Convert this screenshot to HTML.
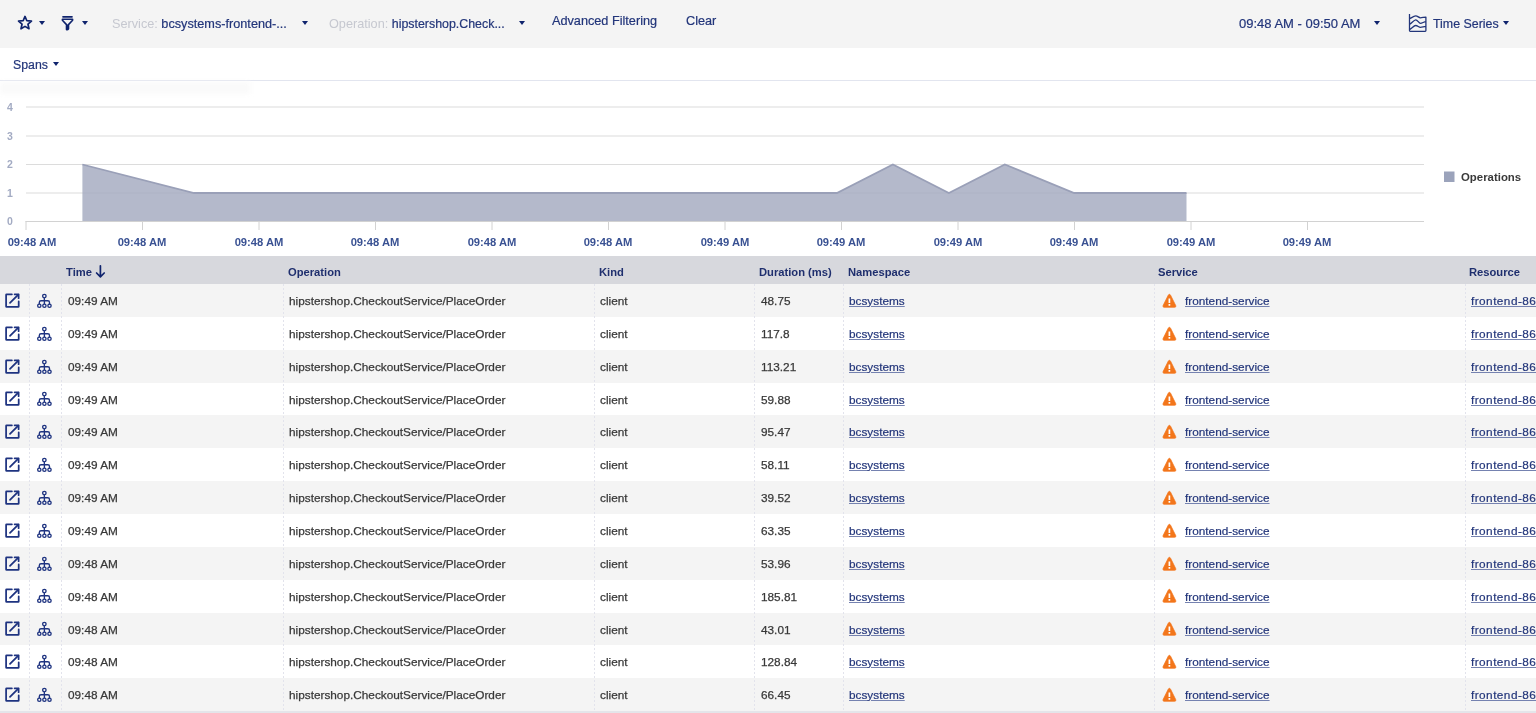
<!DOCTYPE html>
<html><head><meta charset="utf-8">
<style>
*{margin:0;padding:0;box-sizing:border-box}
html,body{width:1536px;height:713px;overflow:hidden;background:#fff;font-family:"Liberation Sans",sans-serif}
.a,.c,.th,.xlab,.ylab{will-change:transform}
.a{position:absolute;white-space:nowrap}
#top{position:absolute;left:0;top:0;width:1536px;height:48px;background:#f4f4f4}
.nav{color:#22357a;-webkit-text-stroke:0.2px #22357a}
.lbl{color:#c6c8d0}
.car{position:absolute;width:0;height:0;border-left:3.7px solid transparent;border-right:3.7px solid transparent;border-top:4.2px solid #0f236d}
#sep{position:absolute;left:0;top:80px;width:1536px;height:1px;background:#e2e5ef}
#th{position:absolute;left:0;top:256px;width:1536px;height:28px;background:#d7d8dd}
.th{position:absolute;white-space:nowrap;top:265px;font-size:11.2px;font-weight:bold;color:#1f2f6e;line-height:14px}
.row{position:absolute;left:0;width:1536px;height:33px}
.g{background:#f4f4f4}
.w{background:#fff}
.c{position:absolute;white-space:nowrap;font-size:11.8px;color:#383838;-webkit-text-stroke:0.25px #383838;line-height:14px}
.lnk{color:#22357a;-webkit-text-stroke:0.2px #22357a;text-decoration:underline;text-decoration-color:#7582b0;text-decoration-thickness:1.3px;text-underline-offset:0.8px}
.vs{position:absolute;top:284px;height:427px;width:1px;background:repeating-linear-gradient(to bottom,#e2e3ec 0 2px,transparent 2px 4px)}
.ylab{position:absolute;left:7px;font-size:10.5px;font-weight:bold;color:#a3abc3;line-height:10px}
.xlab{position:absolute;white-space:nowrap;top:236px;font-size:11.2px;font-weight:bold;color:#3a5293;line-height:12px}
</style></head><body>
<div id="top"></div>
<!-- star -->
<svg class="a" style="left:16.5px;top:15.3px" width="16" height="16" viewBox="0 0 16 16"><path d="M8.00 1.45 L9.84 5.72 L14.47 6.15 L10.97 9.22 L12.00 13.75 L8.00 11.38 L4.00 13.75 L5.03 9.22 L1.53 6.15 L6.16 5.72Z" fill="none" stroke="#0f236d" stroke-width="1.7" stroke-linejoin="round"/></svg>
<div class="car" style="left:39.3px;top:21px"></div>
<!-- funnel -->
<svg class="a" style="left:61px;top:14.6px" width="13" height="17" viewBox="0 0 13 17"><path d="M2 1.8 H11" stroke="#0f236d" stroke-width="1.7" stroke-linecap="round"/><path d="M1.4 4.3 H11.6 V5.3 L7.5 9.6 V13.8 Q6.5 15.2 5.5 14.5 V9.6 L1.4 5.3 Z" fill="none" stroke="#0f236d" stroke-width="1.6" stroke-linejoin="round"/><path d="M5.6 9.6 V14.7 H7.4 V9.6Z" fill="#0f236d"/></svg>
<div class="car" style="left:81.7px;top:21px"></div>
<div class="a" style="left:112px;top:16px;font-size:12.7px;line-height:16px"><span class="lbl">Service: </span><span class="nav">bcsystems-frontend-...</span></div>
<div class="car" style="left:302px;top:21px"></div>
<div class="a" style="left:329px;top:16px;font-size:12.7px;line-height:16px"><span class="lbl">Operation: </span><span class="nav" style="font-size:12.4px">hipstershop.Check...</span></div>
<div class="car" style="left:519px;top:21px"></div>
<div class="a nav" style="left:552px;top:13px;font-size:12.7px;line-height:16px">Advanced Filtering</div>
<div class="a nav" style="left:686px;top:13px;font-size:12.7px;line-height:16px">Clear</div>
<div class="a nav" style="left:1239px;top:16px;font-size:13px;line-height:16px">09:48 AM - 09:50 AM</div>
<div class="car" style="left:1374px;top:21px"></div>
<svg class="a" style="left:1408px;top:14px" width="20" height="19" viewBox="0 0 20 19"><path d="M1.5 0.3 V16.6 Q1.5 17.3 2.2 17.3 H17.2 Q17.9 17.3 17.9 16.6 V3.1 M1.5 4.9 C3.6 3.7 6 1.8 7.7 1.8 C9.6 1.8 10.8 3.8 12.4 3.8 C14.2 3.8 16 3.1 17.9 3.1 M1.5 10.4 C3.6 9.200000000000001 6 5.8 7.7 5.8 C9.6 5.8 10.8 9.3 12.4 9.3 C14.2 9.3 16 7.7 17.9 7.7 M1.5 15.7 C3.6 14.5 6 11.5 7.7 11.5 C9.6 11.5 10.8 13.3 12.4 13.3 C14.2 13.3 16 12.4 17.9 12.4" fill="none" stroke="#22357a" stroke-width="1.3" stroke-linejoin="round" stroke-linecap="round"/></svg>
<div class="a nav" style="left:1433px;top:16px;font-size:12.4px;line-height:16px">Time Series</div>
<div class="car" style="left:1503px;top:21px"></div>

<div class="a nav" style="left:12.5px;top:57.3px;font-size:12.3px;line-height:16px">Spans</div>
<div class="car" style="left:52.6px;top:62px"></div>
<div id="sep"></div>
<div class="a" style="left:0;top:82px;width:250px;height:12px;background:#fafafa;filter:blur(2px)"></div>

<!-- chart -->
<svg class="a" style="left:0;top:81px" width="1536" height="175" viewBox="0 81 1536 175">
<g stroke="#dcdcdc" stroke-width="1.1">
<line x1="26" y1="107" x2="1424" y2="107"/>
<line x1="26" y1="136" x2="1424" y2="136"/>
<line x1="26" y1="164.5" x2="1424" y2="164.5"/>
<line x1="26" y1="193" x2="1424" y2="193"/>
</g>
<path d="M82.4 221.5 L82.4 164.5 L194.1 193 L836.9 193 L892.9 164.5 L948.9 193 L1004.8 164.5 L1074.2 193 L1186.5 193 L1186.5 221.5 Z" fill="#a7adc2" fill-opacity="0.85"/>
<path d="M82.4 164.5 L194.1 193 L836.9 193 L892.9 164.5 L948.9 193 L1004.8 164.5 L1074.2 193 L1186.5 193" fill="none" stroke="#9aa0b8" stroke-width="1.8"/>
<g stroke="#d2d2d2" stroke-width="1">
<line x1="25.5" y1="221.5" x2="1424" y2="221.5"/>
<line x1="26" y1="221" x2="26" y2="230"/>
<line x1="142.5" y1="221" x2="142.5" y2="230"/>
<line x1="259" y1="221" x2="259" y2="230"/>
<line x1="375.5" y1="221" x2="375.5" y2="230"/>
<line x1="492" y1="221" x2="492" y2="230"/>
<line x1="608.5" y1="221" x2="608.5" y2="230"/>
<line x1="725" y1="221" x2="725" y2="230"/>
<line x1="841.5" y1="221" x2="841.5" y2="230"/>
<line x1="958" y1="221" x2="958" y2="230"/>
<line x1="1074.5" y1="221" x2="1074.5" y2="230"/>
<line x1="1191" y1="221" x2="1191" y2="230"/>
<line x1="1307.5" y1="221" x2="1307.5" y2="230"/>
</g>
<rect x="1444" y="171.5" width="10.5" height="10.5" fill="#9ba3bb"/>
</svg>
<div class="ylab" style="top:102px">4</div>
<div class="ylab" style="top:131px">3</div>
<div class="ylab" style="top:159px">2</div>
<div class="ylab" style="top:188px">1</div>
<div class="ylab" style="top:216px">0</div>
<div class="a" style="left:1460.7px;top:171px;font-size:11.4px;font-weight:bold;color:#3a3a3a;line-height:12px">Operations</div>
<div class="xlab" style="left:6.6px;width:50px;text-align:center">09:48 AM</div>
<div class="xlab" style="left:117.4px;width:50px;text-align:center">09:48 AM</div>
<div class="xlab" style="left:233.9px;width:50px;text-align:center">09:48 AM</div>
<div class="xlab" style="left:350.4px;width:50px;text-align:center">09:48 AM</div>
<div class="xlab" style="left:466.8px;width:50px;text-align:center">09:48 AM</div>
<div class="xlab" style="left:583.2px;width:50px;text-align:center">09:48 AM</div>
<div class="xlab" style="left:699.7px;width:50px;text-align:center">09:49 AM</div>
<div class="xlab" style="left:816.1px;width:50px;text-align:center">09:49 AM</div>
<div class="xlab" style="left:932.6px;width:50px;text-align:center">09:49 AM</div>
<div class="xlab" style="left:1049.0px;width:50px;text-align:center">09:49 AM</div>
<div class="xlab" style="left:1165.5px;width:50px;text-align:center">09:49 AM</div>
<div class="xlab" style="left:1282.0px;width:50px;text-align:center">09:49 AM</div>

<div id="th"></div>
<div class="row g" style="top:284.000px"></div>
<div class="row w" style="top:316.850px"></div>
<div class="row g" style="top:349.700px"></div>
<div class="row w" style="top:382.550px"></div>
<div class="row g" style="top:415.400px"></div>
<div class="row w" style="top:448.250px"></div>
<div class="row g" style="top:481.100px"></div>
<div class="row w" style="top:513.950px"></div>
<div class="row g" style="top:546.800px"></div>
<div class="row w" style="top:579.650px"></div>
<div class="row g" style="top:612.500px"></div>
<div class="row w" style="top:645.350px"></div>
<div class="row g" style="top:678.200px"></div>
<svg class="a" style="left:4px;top:291.80px" width="17" height="17" viewBox="0 0 17 17"><g fill="none" stroke="#1e3380" stroke-width="1.75" stroke-linecap="round" stroke-linejoin="round"><path d="M7.9 2.3 H2.6 Q2.1 2.3 2.1 2.8 V14.4 Q2.1 14.9 2.6 14.9 H14.2 Q14.7 14.9 14.7 14.4 V9.4"/><path d="M6 10.9 L14.3 2.6"/><path d="M10.6 2.3 H14.6 V6.2"/></g></svg>
<svg class="a" style="left:36px;top:291.80px" width="17" height="17" viewBox="0 0 17 17"><g fill="none" stroke="#1e3380" stroke-width="1.35"><circle cx="8.35" cy="4.1" r="1.75"/><circle cx="3.3" cy="13.7" r="1.65"/><circle cx="8.4" cy="13.7" r="1.65"/><circle cx="13.5" cy="13.7" r="1.65"/><path d="M8.35 5.85 V8.7 M8.4 8.7 V12 M3.3 12 V10.4 Q3.3 8.7 5 8.7 H11.8 Q13.5 8.7 13.5 10.4 V12.6"/></g></svg>
<div class="c" style="left:68px;top:294.00px">09:49 AM</div>
<div class="c" style="left:289px;top:294.00px">hipstershop.CheckoutService/PlaceOrder</div>
<div class="c" style="left:600px;top:294.00px">client</div>
<div class="c" style="left:761px;top:294.00px">48.75</div>
<div class="c lnk" style="left:849px;top:294.00px">bcsystems</div>
<svg class="a" style="left:1160.8px;top:291.80px" width="17" height="17" viewBox="0 0 17 17"><path d="M8.4 2.3 Q9.0 2.3 9.5 3.1 L14.7 13.5 Q15.4 15.3 13.8 15.3 H3.0 Q1.4 15.3 2.1 13.5 L7.3 3.1 Q7.8 2.3 8.4 2.3Z" fill="#f3761b" stroke="#f3761b" stroke-width="0.7" stroke-linejoin="round"/><path d="M8.4 6.4 V10.9 M8.4 12.1 V13.7" stroke="#fff" stroke-width="1.7"/></svg>
<div class="c lnk" style="left:1185px;top:294.00px">frontend-service</div>
<div class="c lnk" style="left:1471px;top:294.00px;letter-spacing:0.45px">frontend-86</div>
<svg class="a" style="left:4px;top:324.65px" width="17" height="17" viewBox="0 0 17 17"><g fill="none" stroke="#1e3380" stroke-width="1.75" stroke-linecap="round" stroke-linejoin="round"><path d="M7.9 2.3 H2.6 Q2.1 2.3 2.1 2.8 V14.4 Q2.1 14.9 2.6 14.9 H14.2 Q14.7 14.9 14.7 14.4 V9.4"/><path d="M6 10.9 L14.3 2.6"/><path d="M10.6 2.3 H14.6 V6.2"/></g></svg>
<svg class="a" style="left:36px;top:324.65px" width="17" height="17" viewBox="0 0 17 17"><g fill="none" stroke="#1e3380" stroke-width="1.35"><circle cx="8.35" cy="4.1" r="1.75"/><circle cx="3.3" cy="13.7" r="1.65"/><circle cx="8.4" cy="13.7" r="1.65"/><circle cx="13.5" cy="13.7" r="1.65"/><path d="M8.35 5.85 V8.7 M8.4 8.7 V12 M3.3 12 V10.4 Q3.3 8.7 5 8.7 H11.8 Q13.5 8.7 13.5 10.4 V12.6"/></g></svg>
<div class="c" style="left:68px;top:326.85px">09:49 AM</div>
<div class="c" style="left:289px;top:326.85px">hipstershop.CheckoutService/PlaceOrder</div>
<div class="c" style="left:600px;top:326.85px">client</div>
<div class="c" style="left:761px;top:326.85px">117.8</div>
<div class="c lnk" style="left:849px;top:326.85px">bcsystems</div>
<svg class="a" style="left:1160.8px;top:324.65px" width="17" height="17" viewBox="0 0 17 17"><path d="M8.4 2.3 Q9.0 2.3 9.5 3.1 L14.7 13.5 Q15.4 15.3 13.8 15.3 H3.0 Q1.4 15.3 2.1 13.5 L7.3 3.1 Q7.8 2.3 8.4 2.3Z" fill="#f3761b" stroke="#f3761b" stroke-width="0.7" stroke-linejoin="round"/><path d="M8.4 6.4 V10.9 M8.4 12.1 V13.7" stroke="#fff" stroke-width="1.7"/></svg>
<div class="c lnk" style="left:1185px;top:326.85px">frontend-service</div>
<div class="c lnk" style="left:1471px;top:326.85px;letter-spacing:0.45px">frontend-86</div>
<svg class="a" style="left:4px;top:357.50px" width="17" height="17" viewBox="0 0 17 17"><g fill="none" stroke="#1e3380" stroke-width="1.75" stroke-linecap="round" stroke-linejoin="round"><path d="M7.9 2.3 H2.6 Q2.1 2.3 2.1 2.8 V14.4 Q2.1 14.9 2.6 14.9 H14.2 Q14.7 14.9 14.7 14.4 V9.4"/><path d="M6 10.9 L14.3 2.6"/><path d="M10.6 2.3 H14.6 V6.2"/></g></svg>
<svg class="a" style="left:36px;top:357.50px" width="17" height="17" viewBox="0 0 17 17"><g fill="none" stroke="#1e3380" stroke-width="1.35"><circle cx="8.35" cy="4.1" r="1.75"/><circle cx="3.3" cy="13.7" r="1.65"/><circle cx="8.4" cy="13.7" r="1.65"/><circle cx="13.5" cy="13.7" r="1.65"/><path d="M8.35 5.85 V8.7 M8.4 8.7 V12 M3.3 12 V10.4 Q3.3 8.7 5 8.7 H11.8 Q13.5 8.7 13.5 10.4 V12.6"/></g></svg>
<div class="c" style="left:68px;top:359.70px">09:49 AM</div>
<div class="c" style="left:289px;top:359.70px">hipstershop.CheckoutService/PlaceOrder</div>
<div class="c" style="left:600px;top:359.70px">client</div>
<div class="c" style="left:761px;top:359.70px">113.21</div>
<div class="c lnk" style="left:849px;top:359.70px">bcsystems</div>
<svg class="a" style="left:1160.8px;top:357.50px" width="17" height="17" viewBox="0 0 17 17"><path d="M8.4 2.3 Q9.0 2.3 9.5 3.1 L14.7 13.5 Q15.4 15.3 13.8 15.3 H3.0 Q1.4 15.3 2.1 13.5 L7.3 3.1 Q7.8 2.3 8.4 2.3Z" fill="#f3761b" stroke="#f3761b" stroke-width="0.7" stroke-linejoin="round"/><path d="M8.4 6.4 V10.9 M8.4 12.1 V13.7" stroke="#fff" stroke-width="1.7"/></svg>
<div class="c lnk" style="left:1185px;top:359.70px">frontend-service</div>
<div class="c lnk" style="left:1471px;top:359.70px;letter-spacing:0.45px">frontend-86</div>
<svg class="a" style="left:4px;top:390.35px" width="17" height="17" viewBox="0 0 17 17"><g fill="none" stroke="#1e3380" stroke-width="1.75" stroke-linecap="round" stroke-linejoin="round"><path d="M7.9 2.3 H2.6 Q2.1 2.3 2.1 2.8 V14.4 Q2.1 14.9 2.6 14.9 H14.2 Q14.7 14.9 14.7 14.4 V9.4"/><path d="M6 10.9 L14.3 2.6"/><path d="M10.6 2.3 H14.6 V6.2"/></g></svg>
<svg class="a" style="left:36px;top:390.35px" width="17" height="17" viewBox="0 0 17 17"><g fill="none" stroke="#1e3380" stroke-width="1.35"><circle cx="8.35" cy="4.1" r="1.75"/><circle cx="3.3" cy="13.7" r="1.65"/><circle cx="8.4" cy="13.7" r="1.65"/><circle cx="13.5" cy="13.7" r="1.65"/><path d="M8.35 5.85 V8.7 M8.4 8.7 V12 M3.3 12 V10.4 Q3.3 8.7 5 8.7 H11.8 Q13.5 8.7 13.5 10.4 V12.6"/></g></svg>
<div class="c" style="left:68px;top:392.55px">09:49 AM</div>
<div class="c" style="left:289px;top:392.55px">hipstershop.CheckoutService/PlaceOrder</div>
<div class="c" style="left:600px;top:392.55px">client</div>
<div class="c" style="left:761px;top:392.55px">59.88</div>
<div class="c lnk" style="left:849px;top:392.55px">bcsystems</div>
<svg class="a" style="left:1160.8px;top:390.35px" width="17" height="17" viewBox="0 0 17 17"><path d="M8.4 2.3 Q9.0 2.3 9.5 3.1 L14.7 13.5 Q15.4 15.3 13.8 15.3 H3.0 Q1.4 15.3 2.1 13.5 L7.3 3.1 Q7.8 2.3 8.4 2.3Z" fill="#f3761b" stroke="#f3761b" stroke-width="0.7" stroke-linejoin="round"/><path d="M8.4 6.4 V10.9 M8.4 12.1 V13.7" stroke="#fff" stroke-width="1.7"/></svg>
<div class="c lnk" style="left:1185px;top:392.55px">frontend-service</div>
<div class="c lnk" style="left:1471px;top:392.55px;letter-spacing:0.45px">frontend-86</div>
<svg class="a" style="left:4px;top:423.20px" width="17" height="17" viewBox="0 0 17 17"><g fill="none" stroke="#1e3380" stroke-width="1.75" stroke-linecap="round" stroke-linejoin="round"><path d="M7.9 2.3 H2.6 Q2.1 2.3 2.1 2.8 V14.4 Q2.1 14.9 2.6 14.9 H14.2 Q14.7 14.9 14.7 14.4 V9.4"/><path d="M6 10.9 L14.3 2.6"/><path d="M10.6 2.3 H14.6 V6.2"/></g></svg>
<svg class="a" style="left:36px;top:423.20px" width="17" height="17" viewBox="0 0 17 17"><g fill="none" stroke="#1e3380" stroke-width="1.35"><circle cx="8.35" cy="4.1" r="1.75"/><circle cx="3.3" cy="13.7" r="1.65"/><circle cx="8.4" cy="13.7" r="1.65"/><circle cx="13.5" cy="13.7" r="1.65"/><path d="M8.35 5.85 V8.7 M8.4 8.7 V12 M3.3 12 V10.4 Q3.3 8.7 5 8.7 H11.8 Q13.5 8.7 13.5 10.4 V12.6"/></g></svg>
<div class="c" style="left:68px;top:425.40px">09:49 AM</div>
<div class="c" style="left:289px;top:425.40px">hipstershop.CheckoutService/PlaceOrder</div>
<div class="c" style="left:600px;top:425.40px">client</div>
<div class="c" style="left:761px;top:425.40px">95.47</div>
<div class="c lnk" style="left:849px;top:425.40px">bcsystems</div>
<svg class="a" style="left:1160.8px;top:423.20px" width="17" height="17" viewBox="0 0 17 17"><path d="M8.4 2.3 Q9.0 2.3 9.5 3.1 L14.7 13.5 Q15.4 15.3 13.8 15.3 H3.0 Q1.4 15.3 2.1 13.5 L7.3 3.1 Q7.8 2.3 8.4 2.3Z" fill="#f3761b" stroke="#f3761b" stroke-width="0.7" stroke-linejoin="round"/><path d="M8.4 6.4 V10.9 M8.4 12.1 V13.7" stroke="#fff" stroke-width="1.7"/></svg>
<div class="c lnk" style="left:1185px;top:425.40px">frontend-service</div>
<div class="c lnk" style="left:1471px;top:425.40px;letter-spacing:0.45px">frontend-86</div>
<svg class="a" style="left:4px;top:456.05px" width="17" height="17" viewBox="0 0 17 17"><g fill="none" stroke="#1e3380" stroke-width="1.75" stroke-linecap="round" stroke-linejoin="round"><path d="M7.9 2.3 H2.6 Q2.1 2.3 2.1 2.8 V14.4 Q2.1 14.9 2.6 14.9 H14.2 Q14.7 14.9 14.7 14.4 V9.4"/><path d="M6 10.9 L14.3 2.6"/><path d="M10.6 2.3 H14.6 V6.2"/></g></svg>
<svg class="a" style="left:36px;top:456.05px" width="17" height="17" viewBox="0 0 17 17"><g fill="none" stroke="#1e3380" stroke-width="1.35"><circle cx="8.35" cy="4.1" r="1.75"/><circle cx="3.3" cy="13.7" r="1.65"/><circle cx="8.4" cy="13.7" r="1.65"/><circle cx="13.5" cy="13.7" r="1.65"/><path d="M8.35 5.85 V8.7 M8.4 8.7 V12 M3.3 12 V10.4 Q3.3 8.7 5 8.7 H11.8 Q13.5 8.7 13.5 10.4 V12.6"/></g></svg>
<div class="c" style="left:68px;top:458.25px">09:49 AM</div>
<div class="c" style="left:289px;top:458.25px">hipstershop.CheckoutService/PlaceOrder</div>
<div class="c" style="left:600px;top:458.25px">client</div>
<div class="c" style="left:761px;top:458.25px">58.11</div>
<div class="c lnk" style="left:849px;top:458.25px">bcsystems</div>
<svg class="a" style="left:1160.8px;top:456.05px" width="17" height="17" viewBox="0 0 17 17"><path d="M8.4 2.3 Q9.0 2.3 9.5 3.1 L14.7 13.5 Q15.4 15.3 13.8 15.3 H3.0 Q1.4 15.3 2.1 13.5 L7.3 3.1 Q7.8 2.3 8.4 2.3Z" fill="#f3761b" stroke="#f3761b" stroke-width="0.7" stroke-linejoin="round"/><path d="M8.4 6.4 V10.9 M8.4 12.1 V13.7" stroke="#fff" stroke-width="1.7"/></svg>
<div class="c lnk" style="left:1185px;top:458.25px">frontend-service</div>
<div class="c lnk" style="left:1471px;top:458.25px;letter-spacing:0.45px">frontend-86</div>
<svg class="a" style="left:4px;top:488.90px" width="17" height="17" viewBox="0 0 17 17"><g fill="none" stroke="#1e3380" stroke-width="1.75" stroke-linecap="round" stroke-linejoin="round"><path d="M7.9 2.3 H2.6 Q2.1 2.3 2.1 2.8 V14.4 Q2.1 14.9 2.6 14.9 H14.2 Q14.7 14.9 14.7 14.4 V9.4"/><path d="M6 10.9 L14.3 2.6"/><path d="M10.6 2.3 H14.6 V6.2"/></g></svg>
<svg class="a" style="left:36px;top:488.90px" width="17" height="17" viewBox="0 0 17 17"><g fill="none" stroke="#1e3380" stroke-width="1.35"><circle cx="8.35" cy="4.1" r="1.75"/><circle cx="3.3" cy="13.7" r="1.65"/><circle cx="8.4" cy="13.7" r="1.65"/><circle cx="13.5" cy="13.7" r="1.65"/><path d="M8.35 5.85 V8.7 M8.4 8.7 V12 M3.3 12 V10.4 Q3.3 8.7 5 8.7 H11.8 Q13.5 8.7 13.5 10.4 V12.6"/></g></svg>
<div class="c" style="left:68px;top:491.10px">09:49 AM</div>
<div class="c" style="left:289px;top:491.10px">hipstershop.CheckoutService/PlaceOrder</div>
<div class="c" style="left:600px;top:491.10px">client</div>
<div class="c" style="left:761px;top:491.10px">39.52</div>
<div class="c lnk" style="left:849px;top:491.10px">bcsystems</div>
<svg class="a" style="left:1160.8px;top:488.90px" width="17" height="17" viewBox="0 0 17 17"><path d="M8.4 2.3 Q9.0 2.3 9.5 3.1 L14.7 13.5 Q15.4 15.3 13.8 15.3 H3.0 Q1.4 15.3 2.1 13.5 L7.3 3.1 Q7.8 2.3 8.4 2.3Z" fill="#f3761b" stroke="#f3761b" stroke-width="0.7" stroke-linejoin="round"/><path d="M8.4 6.4 V10.9 M8.4 12.1 V13.7" stroke="#fff" stroke-width="1.7"/></svg>
<div class="c lnk" style="left:1185px;top:491.10px">frontend-service</div>
<div class="c lnk" style="left:1471px;top:491.10px;letter-spacing:0.45px">frontend-86</div>
<svg class="a" style="left:4px;top:521.75px" width="17" height="17" viewBox="0 0 17 17"><g fill="none" stroke="#1e3380" stroke-width="1.75" stroke-linecap="round" stroke-linejoin="round"><path d="M7.9 2.3 H2.6 Q2.1 2.3 2.1 2.8 V14.4 Q2.1 14.9 2.6 14.9 H14.2 Q14.7 14.9 14.7 14.4 V9.4"/><path d="M6 10.9 L14.3 2.6"/><path d="M10.6 2.3 H14.6 V6.2"/></g></svg>
<svg class="a" style="left:36px;top:521.75px" width="17" height="17" viewBox="0 0 17 17"><g fill="none" stroke="#1e3380" stroke-width="1.35"><circle cx="8.35" cy="4.1" r="1.75"/><circle cx="3.3" cy="13.7" r="1.65"/><circle cx="8.4" cy="13.7" r="1.65"/><circle cx="13.5" cy="13.7" r="1.65"/><path d="M8.35 5.85 V8.7 M8.4 8.7 V12 M3.3 12 V10.4 Q3.3 8.7 5 8.7 H11.8 Q13.5 8.7 13.5 10.4 V12.6"/></g></svg>
<div class="c" style="left:68px;top:523.95px">09:49 AM</div>
<div class="c" style="left:289px;top:523.95px">hipstershop.CheckoutService/PlaceOrder</div>
<div class="c" style="left:600px;top:523.95px">client</div>
<div class="c" style="left:761px;top:523.95px">63.35</div>
<div class="c lnk" style="left:849px;top:523.95px">bcsystems</div>
<svg class="a" style="left:1160.8px;top:521.75px" width="17" height="17" viewBox="0 0 17 17"><path d="M8.4 2.3 Q9.0 2.3 9.5 3.1 L14.7 13.5 Q15.4 15.3 13.8 15.3 H3.0 Q1.4 15.3 2.1 13.5 L7.3 3.1 Q7.8 2.3 8.4 2.3Z" fill="#f3761b" stroke="#f3761b" stroke-width="0.7" stroke-linejoin="round"/><path d="M8.4 6.4 V10.9 M8.4 12.1 V13.7" stroke="#fff" stroke-width="1.7"/></svg>
<div class="c lnk" style="left:1185px;top:523.95px">frontend-service</div>
<div class="c lnk" style="left:1471px;top:523.95px;letter-spacing:0.45px">frontend-86</div>
<svg class="a" style="left:4px;top:554.60px" width="17" height="17" viewBox="0 0 17 17"><g fill="none" stroke="#1e3380" stroke-width="1.75" stroke-linecap="round" stroke-linejoin="round"><path d="M7.9 2.3 H2.6 Q2.1 2.3 2.1 2.8 V14.4 Q2.1 14.9 2.6 14.9 H14.2 Q14.7 14.9 14.7 14.4 V9.4"/><path d="M6 10.9 L14.3 2.6"/><path d="M10.6 2.3 H14.6 V6.2"/></g></svg>
<svg class="a" style="left:36px;top:554.60px" width="17" height="17" viewBox="0 0 17 17"><g fill="none" stroke="#1e3380" stroke-width="1.35"><circle cx="8.35" cy="4.1" r="1.75"/><circle cx="3.3" cy="13.7" r="1.65"/><circle cx="8.4" cy="13.7" r="1.65"/><circle cx="13.5" cy="13.7" r="1.65"/><path d="M8.35 5.85 V8.7 M8.4 8.7 V12 M3.3 12 V10.4 Q3.3 8.7 5 8.7 H11.8 Q13.5 8.7 13.5 10.4 V12.6"/></g></svg>
<div class="c" style="left:68px;top:556.80px">09:48 AM</div>
<div class="c" style="left:289px;top:556.80px">hipstershop.CheckoutService/PlaceOrder</div>
<div class="c" style="left:600px;top:556.80px">client</div>
<div class="c" style="left:761px;top:556.80px">53.96</div>
<div class="c lnk" style="left:849px;top:556.80px">bcsystems</div>
<svg class="a" style="left:1160.8px;top:554.60px" width="17" height="17" viewBox="0 0 17 17"><path d="M8.4 2.3 Q9.0 2.3 9.5 3.1 L14.7 13.5 Q15.4 15.3 13.8 15.3 H3.0 Q1.4 15.3 2.1 13.5 L7.3 3.1 Q7.8 2.3 8.4 2.3Z" fill="#f3761b" stroke="#f3761b" stroke-width="0.7" stroke-linejoin="round"/><path d="M8.4 6.4 V10.9 M8.4 12.1 V13.7" stroke="#fff" stroke-width="1.7"/></svg>
<div class="c lnk" style="left:1185px;top:556.80px">frontend-service</div>
<div class="c lnk" style="left:1471px;top:556.80px;letter-spacing:0.45px">frontend-86</div>
<svg class="a" style="left:4px;top:587.45px" width="17" height="17" viewBox="0 0 17 17"><g fill="none" stroke="#1e3380" stroke-width="1.75" stroke-linecap="round" stroke-linejoin="round"><path d="M7.9 2.3 H2.6 Q2.1 2.3 2.1 2.8 V14.4 Q2.1 14.9 2.6 14.9 H14.2 Q14.7 14.9 14.7 14.4 V9.4"/><path d="M6 10.9 L14.3 2.6"/><path d="M10.6 2.3 H14.6 V6.2"/></g></svg>
<svg class="a" style="left:36px;top:587.45px" width="17" height="17" viewBox="0 0 17 17"><g fill="none" stroke="#1e3380" stroke-width="1.35"><circle cx="8.35" cy="4.1" r="1.75"/><circle cx="3.3" cy="13.7" r="1.65"/><circle cx="8.4" cy="13.7" r="1.65"/><circle cx="13.5" cy="13.7" r="1.65"/><path d="M8.35 5.85 V8.7 M8.4 8.7 V12 M3.3 12 V10.4 Q3.3 8.7 5 8.7 H11.8 Q13.5 8.7 13.5 10.4 V12.6"/></g></svg>
<div class="c" style="left:68px;top:589.65px">09:48 AM</div>
<div class="c" style="left:289px;top:589.65px">hipstershop.CheckoutService/PlaceOrder</div>
<div class="c" style="left:600px;top:589.65px">client</div>
<div class="c" style="left:761px;top:589.65px">185.81</div>
<div class="c lnk" style="left:849px;top:589.65px">bcsystems</div>
<svg class="a" style="left:1160.8px;top:587.45px" width="17" height="17" viewBox="0 0 17 17"><path d="M8.4 2.3 Q9.0 2.3 9.5 3.1 L14.7 13.5 Q15.4 15.3 13.8 15.3 H3.0 Q1.4 15.3 2.1 13.5 L7.3 3.1 Q7.8 2.3 8.4 2.3Z" fill="#f3761b" stroke="#f3761b" stroke-width="0.7" stroke-linejoin="round"/><path d="M8.4 6.4 V10.9 M8.4 12.1 V13.7" stroke="#fff" stroke-width="1.7"/></svg>
<div class="c lnk" style="left:1185px;top:589.65px">frontend-service</div>
<div class="c lnk" style="left:1471px;top:589.65px;letter-spacing:0.45px">frontend-86</div>
<svg class="a" style="left:4px;top:620.30px" width="17" height="17" viewBox="0 0 17 17"><g fill="none" stroke="#1e3380" stroke-width="1.75" stroke-linecap="round" stroke-linejoin="round"><path d="M7.9 2.3 H2.6 Q2.1 2.3 2.1 2.8 V14.4 Q2.1 14.9 2.6 14.9 H14.2 Q14.7 14.9 14.7 14.4 V9.4"/><path d="M6 10.9 L14.3 2.6"/><path d="M10.6 2.3 H14.6 V6.2"/></g></svg>
<svg class="a" style="left:36px;top:620.30px" width="17" height="17" viewBox="0 0 17 17"><g fill="none" stroke="#1e3380" stroke-width="1.35"><circle cx="8.35" cy="4.1" r="1.75"/><circle cx="3.3" cy="13.7" r="1.65"/><circle cx="8.4" cy="13.7" r="1.65"/><circle cx="13.5" cy="13.7" r="1.65"/><path d="M8.35 5.85 V8.7 M8.4 8.7 V12 M3.3 12 V10.4 Q3.3 8.7 5 8.7 H11.8 Q13.5 8.7 13.5 10.4 V12.6"/></g></svg>
<div class="c" style="left:68px;top:622.50px">09:48 AM</div>
<div class="c" style="left:289px;top:622.50px">hipstershop.CheckoutService/PlaceOrder</div>
<div class="c" style="left:600px;top:622.50px">client</div>
<div class="c" style="left:761px;top:622.50px">43.01</div>
<div class="c lnk" style="left:849px;top:622.50px">bcsystems</div>
<svg class="a" style="left:1160.8px;top:620.30px" width="17" height="17" viewBox="0 0 17 17"><path d="M8.4 2.3 Q9.0 2.3 9.5 3.1 L14.7 13.5 Q15.4 15.3 13.8 15.3 H3.0 Q1.4 15.3 2.1 13.5 L7.3 3.1 Q7.8 2.3 8.4 2.3Z" fill="#f3761b" stroke="#f3761b" stroke-width="0.7" stroke-linejoin="round"/><path d="M8.4 6.4 V10.9 M8.4 12.1 V13.7" stroke="#fff" stroke-width="1.7"/></svg>
<div class="c lnk" style="left:1185px;top:622.50px">frontend-service</div>
<div class="c lnk" style="left:1471px;top:622.50px;letter-spacing:0.45px">frontend-86</div>
<svg class="a" style="left:4px;top:653.15px" width="17" height="17" viewBox="0 0 17 17"><g fill="none" stroke="#1e3380" stroke-width="1.75" stroke-linecap="round" stroke-linejoin="round"><path d="M7.9 2.3 H2.6 Q2.1 2.3 2.1 2.8 V14.4 Q2.1 14.9 2.6 14.9 H14.2 Q14.7 14.9 14.7 14.4 V9.4"/><path d="M6 10.9 L14.3 2.6"/><path d="M10.6 2.3 H14.6 V6.2"/></g></svg>
<svg class="a" style="left:36px;top:653.15px" width="17" height="17" viewBox="0 0 17 17"><g fill="none" stroke="#1e3380" stroke-width="1.35"><circle cx="8.35" cy="4.1" r="1.75"/><circle cx="3.3" cy="13.7" r="1.65"/><circle cx="8.4" cy="13.7" r="1.65"/><circle cx="13.5" cy="13.7" r="1.65"/><path d="M8.35 5.85 V8.7 M8.4 8.7 V12 M3.3 12 V10.4 Q3.3 8.7 5 8.7 H11.8 Q13.5 8.7 13.5 10.4 V12.6"/></g></svg>
<div class="c" style="left:68px;top:655.35px">09:48 AM</div>
<div class="c" style="left:289px;top:655.35px">hipstershop.CheckoutService/PlaceOrder</div>
<div class="c" style="left:600px;top:655.35px">client</div>
<div class="c" style="left:761px;top:655.35px">128.84</div>
<div class="c lnk" style="left:849px;top:655.35px">bcsystems</div>
<svg class="a" style="left:1160.8px;top:653.15px" width="17" height="17" viewBox="0 0 17 17"><path d="M8.4 2.3 Q9.0 2.3 9.5 3.1 L14.7 13.5 Q15.4 15.3 13.8 15.3 H3.0 Q1.4 15.3 2.1 13.5 L7.3 3.1 Q7.8 2.3 8.4 2.3Z" fill="#f3761b" stroke="#f3761b" stroke-width="0.7" stroke-linejoin="round"/><path d="M8.4 6.4 V10.9 M8.4 12.1 V13.7" stroke="#fff" stroke-width="1.7"/></svg>
<div class="c lnk" style="left:1185px;top:655.35px">frontend-service</div>
<div class="c lnk" style="left:1471px;top:655.35px;letter-spacing:0.45px">frontend-86</div>
<svg class="a" style="left:4px;top:686.00px" width="17" height="17" viewBox="0 0 17 17"><g fill="none" stroke="#1e3380" stroke-width="1.75" stroke-linecap="round" stroke-linejoin="round"><path d="M7.9 2.3 H2.6 Q2.1 2.3 2.1 2.8 V14.4 Q2.1 14.9 2.6 14.9 H14.2 Q14.7 14.9 14.7 14.4 V9.4"/><path d="M6 10.9 L14.3 2.6"/><path d="M10.6 2.3 H14.6 V6.2"/></g></svg>
<svg class="a" style="left:36px;top:686.00px" width="17" height="17" viewBox="0 0 17 17"><g fill="none" stroke="#1e3380" stroke-width="1.35"><circle cx="8.35" cy="4.1" r="1.75"/><circle cx="3.3" cy="13.7" r="1.65"/><circle cx="8.4" cy="13.7" r="1.65"/><circle cx="13.5" cy="13.7" r="1.65"/><path d="M8.35 5.85 V8.7 M8.4 8.7 V12 M3.3 12 V10.4 Q3.3 8.7 5 8.7 H11.8 Q13.5 8.7 13.5 10.4 V12.6"/></g></svg>
<div class="c" style="left:68px;top:688.20px">09:48 AM</div>
<div class="c" style="left:289px;top:688.20px">hipstershop.CheckoutService/PlaceOrder</div>
<div class="c" style="left:600px;top:688.20px">client</div>
<div class="c" style="left:761px;top:688.20px">66.45</div>
<div class="c lnk" style="left:849px;top:688.20px">bcsystems</div>
<svg class="a" style="left:1160.8px;top:686.00px" width="17" height="17" viewBox="0 0 17 17"><path d="M8.4 2.3 Q9.0 2.3 9.5 3.1 L14.7 13.5 Q15.4 15.3 13.8 15.3 H3.0 Q1.4 15.3 2.1 13.5 L7.3 3.1 Q7.8 2.3 8.4 2.3Z" fill="#f3761b" stroke="#f3761b" stroke-width="0.7" stroke-linejoin="round"/><path d="M8.4 6.4 V10.9 M8.4 12.1 V13.7" stroke="#fff" stroke-width="1.7"/></svg>
<div class="c lnk" style="left:1185px;top:688.20px">frontend-service</div>
<div class="c lnk" style="left:1471px;top:688.20px;letter-spacing:0.45px">frontend-86</div>
<div class="vs" style="left:29.0px"></div>
<div class="vs" style="left:61.0px"></div>
<div class="vs" style="left:283.0px"></div>
<div class="vs" style="left:594.0px"></div>
<div class="vs" style="left:754.0px"></div>
<div class="vs" style="left:843.0px"></div>
<div class="vs" style="left:1154.0px"></div>
<div class="vs" style="left:1465.0px"></div>
<div class="th" style="left:66px">Time</div>
<div class="th" style="left:288px">Operation</div>
<div class="th" style="left:599px">Kind</div>
<div class="th" style="left:759px">Duration (ms)</div>
<div class="th" style="left:848px">Namespace</div>
<div class="th" style="left:1158px">Service</div>
<div class="th" style="left:1469px">Resource</div>
<svg class="a" style="left:94px;top:263px" width="13" height="17" viewBox="0 0 13 17"><path d="M6.4 2.8 V13.6 M2.6 10 L6.4 13.8 L10.2 10" fill="none" stroke="#0f236d" stroke-width="1.7" stroke-linecap="round" stroke-linejoin="round"/></svg>
<div class="a" style="left:0;top:711px;width:1536px;height:2px;background:#e4e5ea"></div>
</body></html>
